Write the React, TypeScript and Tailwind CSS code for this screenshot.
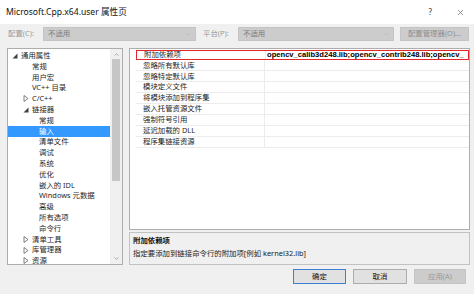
import { ChevronUp, ChevronDown, X } from "lucide-react";

const FONT = "font-['Noto_Sans','Noto_Sans_CJK_SC',sans-serif]";

type TreeItem = { label: string; depth: number; arrow?: "open" | "closed"; selected?: boolean };

const tree: TreeItem[] = [
  { label: "通用属性", depth: 0, arrow: "open" },
  { label: "常规", depth: 1 },
  { label: "用户宏", depth: 1 },
  { label: "VC++ 目录", depth: 1 },
  { label: "C/C++", depth: 1, arrow: "closed" },
  { label: "链接器", depth: 1, arrow: "open" },
  { label: "常规", depth: 2 },
  { label: "输入", depth: 2, selected: true },
  { label: "清单文件", depth: 2 },
  { label: "调试", depth: 2 },
  { label: "系统", depth: 2 },
  { label: "优化", depth: 2 },
  { label: "嵌入的 IDL", depth: 2 },
  { label: "Windows 元数据", depth: 2 },
  { label: "高级", depth: 2 },
  { label: "所有选项", depth: 2 },
  { label: "命令行", depth: 2 },
  { label: "清单工具", depth: 1, arrow: "closed" },
  { label: "库管理器", depth: 1, arrow: "closed" },
  { label: "资源", depth: 1, arrow: "closed" },
];

const props = [
  "附加依赖项",
  "忽略所有默认库",
  "忽略特定默认库",
  "模块定义文件",
  "将模块添加到程序集",
  "嵌入托管资源文件",
  "强制符号引用",
  "延迟加载的 DLL",
  "程序集链接资源",
];

function Arrow({ kind }: { kind?: "open" | "closed" }) {
  if (kind === "open") {
    return (
      <svg width="6" height="6" viewBox="0 0 6 6" className="shrink-0">
        <path d="M5.5 0.5 L5.5 5.5 L0.5 5.5 Z" fill="#404040" />
      </svg>
    );
  }
  if (kind === "closed") {
    return (
      <svg width="6" height="7" viewBox="0 0 6 7" className="shrink-0">
        <path d="M1 0.5 L5 3.5 L1 6.5 Z" fill="none" stroke="#707070" strokeWidth="0.9" />
      </svg>
    );
  }
  return <span className="w-[6px] shrink-0" />;
}

function TreeRow({ item }: { item: TreeItem }) {
  const pad = item.depth === 0 ? "pl-[4px]" : item.depth === 1 ? "pl-[15px]" : "pl-[22px]";
  return (
    <div
      className={`flex h-[10.8px] items-center gap-[3px] whitespace-nowrap ${pad} ${
        item.selected ? "bg-[#3399ff] text-white" : "text-[#1e1e1e]"
      }`}
    >
      <Arrow kind={item.arrow} />
      <span>{item.label}</span>
    </div>
  );
}

function Combo({ value, width }: { value: string; width: string }) {
  return (
    <div
      className={`flex h-[14px] ${width} shrink-0 items-center justify-between border border-[#c4c4c4] bg-[#cccccc] pl-[4px] pr-[3px] text-[#7a7a7a]`}
    >
      <span>{value}</span>
      <ChevronDown className="h-[7px] w-[7px] text-[#a8a8a8]" strokeWidth={1.5} />
    </div>
  );
}

export default function App() {
  return (
    <div className={`flex h-[294px] w-[474px] flex-col overflow-hidden bg-[#f0f0f0] text-[7.4px] leading-none ${FONT}`}>
      <div className="flex h-[24px] shrink-0 items-center bg-white pl-[6px] pr-[9px]">
        <span className="text-[8.6px] text-[#111]">Microsoft.Cpp.x64.user 属性页</span>
        <span className="ml-auto mr-[24px] text-[8px] text-[#333]">?</span>
        <X className="h-[9px] w-[9px] text-[#333]" strokeWidth={1.3} />
      </div>

      <div className="mt-[3px] flex h-[14px] items-center pl-[8px] text-[#9a9a9a]">
        <span className="w-[35px] shrink-0">配置(C):</span>
        <Combo value="不适用" width="w-[153px]" />
        <span className="ml-[7px] w-[35px] shrink-0">平台(P):</span>
        <Combo value="不适用" width="w-[156px]" />
        <div className="ml-[6px] flex h-[14px] w-[69px] shrink-0 items-center justify-center border border-[#c4c4c4] bg-[#cccccc] text-[#8e8e8e]">
          配置管理器(O)...
        </div>
      </div>

      <div className="mt-[7px] flex pl-[7px] pr-[4px]">
        <div className="flex h-[217px] w-[116px] shrink-0 border border-[#adadad] bg-white">
          <div className="min-w-0 flex-1 overflow-hidden pt-[1.4px]">
            {tree.map((item, i) => (
              <TreeRow key={i} item={item} />
            ))}
          </div>
          <div className="flex w-[12px] shrink-0 flex-col items-center bg-[#f0f0f0]">
            <ChevronUp className="mt-[2px] h-[7px] w-[7px] text-[#606060]" strokeWidth={1.6} />
            <div className="mt-[1px] h-[122px] w-[8px] bg-[#c6c6c6]" />
            <ChevronDown className="mt-auto mb-[2px] h-[7px] w-[7px] text-[#606060]" strokeWidth={1.6} />
          </div>
        </div>

        <div className="ml-[6px] flex min-w-0 flex-1 flex-col">
          <div className="h-[182px] overflow-hidden border border-[#adadad] bg-white pl-[6px] pt-[0.5px]">
            {props.map((p, i) => (
              <div
                key={p}
                className={`flex h-[10.9px] items-center overflow-hidden ${
                  i === 0 ? "border border-[#e0282a]" : "border-b border-[#ececec]"
                }`}
              >
                <span className="w-[128px] shrink-0 whitespace-nowrap pl-[7px] text-[#1e1e1e]">{p}</span>
                <span className="h-full shrink-0 border-l border-[#ececec]" />
                {i === 0 && (
                  <span className="min-w-0 overflow-hidden whitespace-nowrap pl-[1px] font-['Liberation_Sans',sans-serif] text-[7.6px] font-bold text-black">
                    opencv_calib3d248.lib;opencv_contrib248.lib;opencv_
                  </span>
                )}
              </div>
            ))}
          </div>
          <div className="mt-[2px] h-[33px] border border-[#c2c2c2] bg-[#f0f0f0] pl-[3px] pt-[4px]">
            <div className="font-bold text-[#111]">附加依赖项</div>
            <div className="mt-[6px] whitespace-nowrap text-[#222]">指定要添加到链接命令行的附加项[例如 kernel32.lib]</div>
          </div>
        </div>
      </div>

      <div className="mt-[4px] flex items-center justify-end gap-[7px] pr-[8px]">
        <div className="flex h-[15px] w-[53px] items-center justify-center border border-[#3c7fd4] bg-[#e1e1e1] text-[#111]">
          确定
        </div>
        <div className="flex h-[15px] w-[54px] items-center justify-center border border-[#adadad] bg-[#e1e1e1] text-[#111]">
          取消
        </div>
        <div className="flex h-[15px] w-[52px] items-center justify-center border border-[#c4c4c4] bg-[#cccccc] text-[#9a9a9a]">
          应用(A)
        </div>
      </div>
    </div>
  );
}
